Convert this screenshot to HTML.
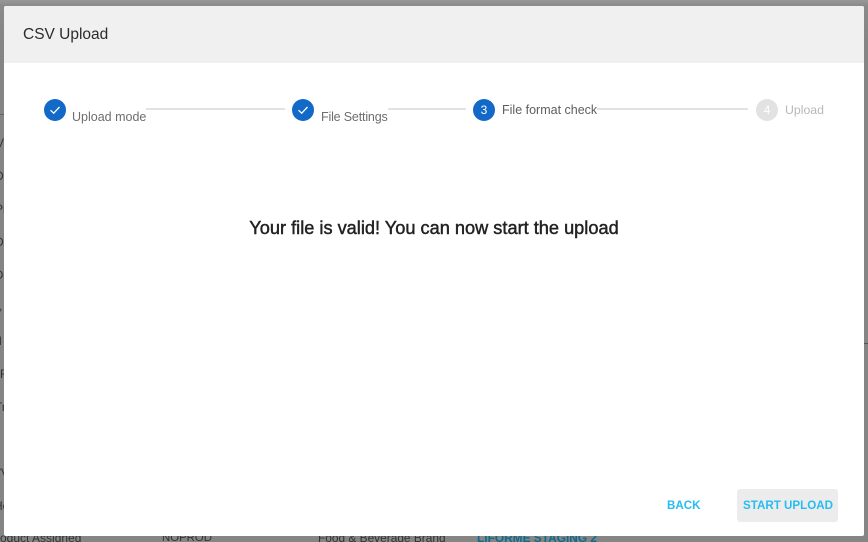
<!DOCTYPE html>
<html>
<head>
<meta charset="utf-8">
<style>
html,body{margin:0;padding:0;width:868px;height:542px;overflow:hidden;background:#8a8a8a;font-family:"Liberation Sans",sans-serif}
.a{position:absolute;white-space:nowrap}
#bg{position:absolute;left:0;top:0;width:868px;height:542px;background:linear-gradient(#979797 0,#8a8a8a 6px,#858585 40px,#858585 100%);overflow:hidden}
.bt{color:#333;font-size:12px;line-height:16px}
#modal{position:absolute;left:4px;top:6px;width:860px;height:530px;background:#fff;border-radius:2px;overflow:hidden}
#head{position:absolute;left:0;top:0;width:860px;height:57px;background:#f0f0f0}
.c{position:absolute;width:22px;height:22px;border-radius:50%;background:#1269c7;color:#fff;font-size:12px;line-height:22px;text-align:center}
.l{position:absolute;height:2px;background:#e2e2e2}
.t{position:absolute;font-size:12.5px;line-height:16px;color:#6e6e6e;white-space:nowrap}
.b{position:absolute;font-size:11.6px;font-weight:bold;color:#25bdf2;line-height:16px;white-space:nowrap}
</style>
</head>
<body>
<div id="bg">
<div class="a" style="left:0;top:114px;width:4px;height:1px;background:#666"></div>
<div class="a bt" style="left:-4px;top:135px">Vr</div>
<div class="a bt" style="left:-5px;top:168px">Do</div>
<div class="a bt" style="left:-5px;top:201px">Pr</div>
<div class="a bt" style="left:-5px;top:234px">Do</div>
<div class="a bt" style="left:-6px;top:267px">Oc</div>
<div class="a bt" style="left:-1px;top:298px">,</div>
<div class="a bt" style="left:-1px;top:333px">l</div>
<div class="a bt" style="left:0;top:366px">F</div>
<div class="a bt" style="left:-5px;top:399px">Tr</div>
<div class="a bt" style="left:-7px;top:465px">VV</div>
<div class="a bt" style="left:-6px;top:498px">Ho</div>
<div class="a bt" style="left:-12px;top:530px">Product Assigned</div>
<div class="a bt" style="left:162px;top:530px;font-size:11.4px">NOPROD</div>
<div class="a bt" style="left:318px;top:530px;font-size:11.9px">Food &amp; Beverage Brand</div>
<div class="a" style="left:477px;top:530px;font-size:11.9px;line-height:16px;font-weight:bold;color:#0f6b8d">LIFORME STAGING 2</div>
<div class="a" style="left:864px;top:343px;width:4px;height:1px;background:#555"></div>
</div>
<div id="modal">
<div id="head"></div>
<div class="a" style="left:19px;top:19px;font-size:15.5px;line-height:20px;color:#2b2b2b">CSV Upload</div>

<div class="c" style="left:40px;top:93px"><svg width="22" height="22" viewBox="0 0 22 22"><path d="M6.5 11.2l3.2 3 5.8-6.2" fill="none" stroke="#fff" stroke-width="1.3"/></svg></div>
<div class="t" style="left:68px;top:103px">Upload mode</div>
<div class="l" style="left:142px;top:102px;width:139px"></div>

<div class="c" style="left:288px;top:93px"><svg width="22" height="22" viewBox="0 0 22 22"><path d="M6.5 11.2l3.2 3 5.8-6.2" fill="none" stroke="#fff" stroke-width="1.3"/></svg></div>
<div class="t" style="left:317px;top:103px;letter-spacing:-.17px">File Settings</div>
<div class="l" style="left:384px;top:102px;width:78px"></div>

<div class="c" style="left:469px;top:93px">3</div>
<div class="t" style="left:498px;top:96px;color:#5e5e5e">File format check</div>
<div class="l" style="left:593px;top:102px;width:151px"></div>

<div class="c" style="left:752px;top:93px;background:#e2e2e2">4</div>
<div class="t" style="left:781px;top:96px;color:#b8b8b8;font-size:12.3px">Upload</div>

<div class="a" style="left:0;top:211px;width:860px;text-align:center;font-size:18.2px;line-height:22px;color:#222;-webkit-text-stroke:.45px #222">Your file is valid! You can now start the upload</div>

<div class="b" style="left:663px;top:492px">BACK</div>
<div class="a" style="left:733px;top:483px;width:101px;height:33px;background:#ececec;border-radius:3px"></div>
<div class="b" style="left:739px;top:492px">START UPLOAD</div>
</div>
</body>
</html>
